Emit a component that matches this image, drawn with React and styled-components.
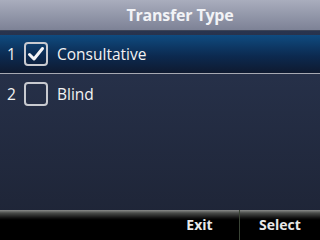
import styled, { createGlobalStyle } from 'styled-components'

const Global = createGlobalStyle`
  html, body { margin: 0; padding: 0; background: #000; }
  body { font-family: "Open Sans", "DejaVu Sans", sans-serif; }
`

const Screen = styled.div`
  width: 320px;
  height: 240px;
  display: flex;
  flex-direction: column;
  background: linear-gradient(#2a3652, #1d2334);
  overflow: hidden;
`

const Header = styled.div`
  height: 30px;
  flex: none;
  display: flex;
  align-items: center;
  justify-content: center;
  padding-left: 40px;
  box-sizing: border-box;
  background: linear-gradient(#a9adbd, #7d8296);
  color: #f2f3f6;
  font-weight: 700;
  font-size: 16px;
  letter-spacing: -0.2px;
`

const List = styled.div`
  flex: 1;
  display: flex;
  flex-direction: column;
  padding-top: 4px;
  border-top: 1px solid #3c4356;
`

const Row = styled.div`
  height: ${p => p.$selected ? '39px' : '40px'};
  display: flex;
  align-items: center;
  color: #f2f2f2;
  font-size: 15.5px;
  box-sizing: border-box;
  background: ${p => p.$selected ? 'linear-gradient(#0f4b80, #0c2a50 55%, #0f1a30)' : 'transparent'};
  border-bottom: ${p => p.$selected ? '1px solid #a7a9b3' : 'none'};
`

const Num = styled.span`
  width: 24px;
  padding-left: 7px;
  box-sizing: border-box;
`

const Box = styled.span`
  width: 24px;
  height: 24px;
  box-sizing: border-box;
  border: 2px solid #c8cad0;
  border-radius: 4px;
  margin-right: 9px;
  display: flex;
  align-items: center;
  justify-content: center;
`

const SoftKeys = styled.div`
  height: 30px;
  flex: none;
  display: grid;
  grid-template-columns: 80px 80px 80px 80px;
  background: linear-gradient(#8a8c8a 0px, #4a4c4a 3px, #101010 8px, #000 10px);
`

const Key = styled.div`
  display: flex;
  align-items: center;
  justify-content: center;
  padding-bottom: 2px;
  color: #e8e8e8;
  font-weight: 700;
  font-size: 14px;
  border-right: ${p => p.$divider ? '1px solid #3a4436' : 'none'};
`

function Check() {
  return (
    <svg width="18" height="16" viewBox="0 0 18 16">
      <path d="M2.5 8.5 L7 13 L15.5 2.5" fill="none" stroke="#f4f4f6" strokeWidth="3" strokeLinecap="round" strokeLinejoin="round" />
    </svg>
  )
}

const items = [
  { n: 1, label: 'Consultative', checked: true },
  { n: 2, label: 'Blind', checked: false },
]

export default function App() {
  return (
    <Screen>
      <Global />
      <Header>Transfer Type</Header>
      <List>
        {items.map(it => (
          <Row key={it.n} $selected={it.checked}>
            <Num>{it.n}</Num>
            <Box>{it.checked && <Check />}</Box>
            {it.label}
          </Row>
        ))}
      </List>
      <SoftKeys>
        <Key />
        <Key />
        <Key $divider>Exit</Key>
        <Key>Select</Key>
      </SoftKeys>
    </Screen>
  )
}
